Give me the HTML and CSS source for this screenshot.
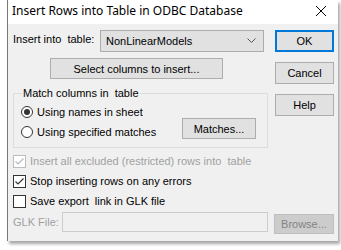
FILE: index.html
```html
<!DOCTYPE html>
<html>
<head>
<meta charset="utf-8">
<link rel="stylesheet" href="styles.css">
</head>
<body>
<div class="window">
  <div class="titlebar">
    <span class="title">Insert Rows into Table in ODBC Database</span>
    <svg class="close" width="12" height="12" viewBox="0 0 12 12"><path d="M1 1 L11 11 M11 1 L1 11" stroke="#000" stroke-width="1" fill="none"/></svg>
  </div>
  <div class="content">
    <div class="top">
      <div class="main">
        <div class="row1">
          <span class="lbl-table">Insert into&nbsp; table:</span>
          <div class="combo">
            <span>NonLinearModels</span>
            <svg class="chev" width="9" height="6" viewBox="0 0 9 6"><path d="M0.5 0.5 L4.5 4.5 L8.5 0.5" stroke="#555" stroke-width="1" fill="none"/></svg>
          </div>
        </div>
        <div class="btn btn-select">Select columns to insert...</div>
        <fieldset class="group">
          <legend>Match columns in&nbsp; table</legend>
          <div class="group-body">
            <div class="radios">
              <div class="radio-row"><span class="radio on"></span><span>Using names in sheet</span></div>
              <div class="radio-row"><span class="radio"></span><span>Using specified matches</span></div>
            </div>
            <div class="btn btn-matches">Matches...</div>
          </div>
        </fieldset>
      </div>
      <div class="side">
        <div class="btn btn-side btn-default">OK</div>
        <div class="btn btn-side">Cancel</div>
        <div class="btn btn-side">Help</div>
      </div>
    </div>
    <div class="checks">
      <div class="check-row disabled"><span class="box checked"><svg width="11" height="11" viewBox="0 0 11 11"><path d="M1.5 5.5 L4 8 L9.5 2.5" stroke="#bcbcbc" stroke-width="1.2" fill="none"/></svg></span><span>Insert all excluded (restricted) rows into&nbsp; table</span></div>
      <div class="check-row"><span class="box checked"><svg width="11" height="11" viewBox="0 0 11 11"><path d="M1.5 5.5 L4 8 L9.5 2.5" stroke="#333" stroke-width="1.2" fill="none"/></svg></span><span>Stop inserting rows on any errors</span></div>
      <div class="check-row"><span class="box"></span><span>Save export&nbsp; link in GLK file</span></div>
    </div>
    <div class="glk-row">
      <span class="lbl-glk">GLK File:</span>
      <div class="glk-input"></div>
      <div class="btn btn-browse">Browse...</div>
    </div>
  </div>
</div>
</body>
</html>
```
FILE: styles.css
```css
html, body {
  margin: 0;
  padding: 0;
  background: #ffffff;
}
body {
  width: 341px;
  height: 250px;
  overflow: hidden;
  font-family: "Liberation Sans", Arial, sans-serif;
  font-size: 11px;
  color: #000;
}
.window {
  margin-left: 7px;
  width: 330px;
  height: 241px;
  border-left: 1px solid #7a7a7a;
  box-shadow: 2px 3px 3px rgba(0,0,0,0.35);
  display: flex;
  flex-direction: column;
}
.titlebar {
  height: 24px;
  background: #ffffff;
  display: flex;
  align-items: center;
  justify-content: space-between;
  flex: none;
}
.title {
  font-family: "Noto Sans", "Open Sans", sans-serif;
  font-size: 12px;
  padding-left: 4px;
  margin-top: -4px;
}
.close {
  margin-right: 11px;
  margin-top: -3px;
}
.content {
  flex: 1;
  background: #f0f0f0;
  padding-left: 5px;
  display: flex;
  flex-direction: column;
}
.top {
  display: flex;
}
.main {
  width: 255px;
  display: flex;
  flex-direction: column;
}
.row1 {
  margin-top: 6px;
  height: 22px;
  display: flex;
  align-items: center;
}
.lbl-table {
  width: 87px;
  margin-top: -4px;
}
.combo {
  width: 162px;
  height: 20px;
  background: #e1e1e1;
  border: 1px solid #adadad;
  display: flex;
  align-items: center;
  justify-content: space-between;
  padding-left: 5px;
  box-sizing: border-box;
  width: 164px;
  height: 22px;
}
.chev {
  margin-right: 7px;
}
.btn {
  background: #e1e1e1;
  border: 1px solid #adadad;
  box-sizing: border-box;
  display: flex;
  align-items: center;
  justify-content: center;
}
.btn-select {
  margin-top: 6px;
  margin-left: 37px;
  width: 173px;
  height: 21px;
}
.group {
  margin: 8px 0 0 0;
  padding: 0 11px 5px 7px;
  border: 1px solid #dcdcdc;
  width: 255px;
  box-sizing: border-box;
  min-width: 0;
}
.group legend {
  margin-left: 1px;
  padding: 0 1px;
  line-height: 13px;
}
.group-body {
  display: flex;
  justify-content: space-between;
  align-items: flex-end;
}
.radios {
  margin-top: 2px;
  display: flex;
  flex-direction: column;
}
.radio-row {
  height: 20px;
  display: flex;
  align-items: center;
  gap: 4px;
}
.radio {
  width: 12px;
  height: 12px;
  border: 1px solid #333;
  border-radius: 50%;
  background: #fff;
  box-sizing: border-box;
  display: flex;
  align-items: center;
  justify-content: center;
}
.radio.on::after {
  content: "";
  width: 6px;
  height: 6px;
  border-radius: 50%;
  background: #333;
}
.btn-matches {
  width: 74px;
  height: 21px;
  margin-bottom: 3px;
}
.side {
  margin-left: 7px;
  display: flex;
  flex-direction: column;
  gap: 10px;
  padding-top: 6px;
}
.btn-side {
  width: 59px;
  height: 22px;
}
.btn-default {
  border: 2px solid #0078d7;
}
.checks {
  margin-top: 3px;
  display: flex;
  flex-direction: column;
}
.check-row {
  height: 20px;
  display: flex;
  align-items: center;
  gap: 4px;
}
.check-row.disabled {
  color: #a0a0a0;
}
.box {
  width: 13px;
  height: 13px;
  border: 1px solid #333;
  background: #fff;
  box-sizing: border-box;
  display: flex;
  align-items: center;
  justify-content: center;
}
.disabled .box {
  border-color: #bcbcbc;
}
.glk-row {
  margin-top: 1px;
  display: flex;
  align-items: flex-start;
}
.lbl-glk {
  width: 49px;
  color: #a0a0a0;
  margin-top: 4px;
}
.glk-input {
  width: 206px;
  height: 20px;
  border: 1px solid #cccccc;
  background: #f0f0f0;
  box-sizing: border-box;
}
.btn-browse {
  margin-left: 6px;
  margin-top: 2px;
  width: 60px;
  height: 20px;
  background: #cccccc;
  border-color: #bfbfbf;
  color: #838383;
}
```
